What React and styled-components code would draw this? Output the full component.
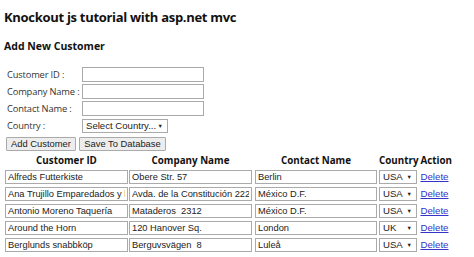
import React from "react";
import styled, { createGlobalStyle } from "styled-components";

const GlobalStyle = createGlobalStyle`
	body {
		margin: 0;
		padding: 0 4px;
		background: #fff;
		color: #111;
		font-family: "Open Sans", "DejaVu Sans", sans-serif;
	}
`;

const Title = styled.h1`
	font-size: 13px;
	font-weight: 700;
	margin: 8px 0 0;
	line-height: 18px;
	letter-spacing: -0.3px;
	white-space: nowrap;
`;

const SubTitle = styled.h2`
	font-size: 10.5px;
	font-weight: 700;
	margin: 13px 0 0;
	line-height: 14px;
`;

const Form = styled.div`
	margin-top: 14px;
	display: grid;
	grid-template-columns: 78px auto;
	grid-auto-rows: 15px;
	row-gap: 2px;
	align-items: center;
	justify-items: start;
`;

const Label = styled.label`
	font-size: 9.3px;
	letter-spacing: -0.15px;
	color: #333;
	line-height: 15px;
	padding-left: 3px;
	white-space: nowrap;
`;

const TextInput = styled.input`
	display: block;
	box-sizing: border-box;
	width: ${ p => p.w || 122 }px;
	height: ${ p => p.h || 15 }px;
	border: 1px solid #aaa;
	padding: 0 2px;
	font-family: "Liberation Sans", Arial, sans-serif;
	font-size: 9.3px;
	color: #222;
	background: #fff;
	margin: 0;
	outline: none;
`;

const Select = styled.div`
	box-sizing: border-box;
	width: ${ p => p.w }px;
	height: 14px;
	border: 1px solid #aaa;
	background: #fff;
	display: flex;
	align-items: center;
	justify-content: space-between;
	padding: 0 4px 0 3px;
	font-family: "Liberation Sans", Arial, sans-serif;
	font-size: 9.6px;
	color: #222;
	white-space: nowrap;
	&::after {
		content: "▼";
		font-size: 5.5px;
	}
`;

const Buttons = styled.div`
	display: flex;
	gap: 3px;
	margin-top: 4px;
	padding-left: 2px;
`;

const Button = styled.button`
	box-sizing: border-box;
	width: ${ p => p.w }px;
	height: 14px;
	padding: 0;
	text-align: center;
	border: 1px solid #aaa;
	background: #ededed;
	font-family: "Liberation Sans", Arial, sans-serif;
	font-size: 9.4px;
	color: #222;
	line-height: 12px;
	border-radius: 1px;
`;

const Table = styled.table`
	margin-top: 1px;
	margin-left: 1px;
	border-collapse: separate;
	border-spacing: 0 3.5px;
`;

const Th = styled.th`
	font-size: 9.8px;
	font-weight: 700;
	padding: 0 ${ p => p.pr || 0 }px 0 0;
	line-height: 12px;
	text-align: center;
	white-space: nowrap;
`;

const Td = styled.td`
	padding: 0 ${ p => p.pr || 0 }px 0 0;
	height: 14px;
	font-family: "Liberation Sans", Arial, sans-serif;
	font-size: 9.7px;
	line-height: 14px;
	vertical-align: middle;
`;

const DeleteLink = styled.a`
	color: #3434c8;
	text-decoration: underline;
`;

const customers = [
	["Alfreds Futterkiste", "Obere Str. 57", "Berlin", "USA"],
	["Ana Trujillo Emparedados y helados", "Avda. de la Constitución 2222", "México D.F.", "USA"],
	["Antonio Moreno Taquería", "Mataderos  2312", "México D.F.", "USA"],
	["Around the Horn", "120 Hanover Sq.", "London", "UK"],
	["Berglunds snabbköp", "Berguvsvägen  8", "Luleå", "USA"],
];

export default function App() {
	return (
		<>
			<GlobalStyle />
			<Title>Knockout js tutorial with asp.net mvc</Title>
			<SubTitle>Add New Customer</SubTitle>
			<Form>
				<Label>Customer ID :</Label>
				<TextInput />
				<Label>Company Name :</Label>
				<TextInput />
				<Label>Contact Name :</Label>
				<TextInput />
				<Label>Country :</Label>
				<Select w={86}>Select Country...</Select>
			</Form>
			<Buttons>
				<Button w={70}>Add Customer</Button>
				<Button w={87}>Save To Database</Button>
			</Buttons>
			<Table>
				<thead>
					<tr>
						<Th pr={1}>Customer ID</Th>
						<Th pr={3}>Company Name</Th>
						<Th pr={2}>Contact Name</Th>
						<Th pr={2}>Country</Th>
						<Th>Action</Th>
					</tr>
				</thead>
				<tbody>
					{customers.map(c => (
						<tr key={c[0]}>
							<Td pr={1}><TextInput defaultValue={c[0]} w={123} h={14} /></Td>
							<Td pr={3}><TextInput defaultValue={c[1]} w={123} h={14} /></Td>
							<Td pr={2}><TextInput defaultValue={c[2]} w={122} h={14} /></Td>
							<Td pr={2}><Select w={38}>{c[3]}</Select></Td>
							<Td><DeleteLink href="#">Delete</DeleteLink></Td>
						</tr>
					))}
				</tbody>
			</Table>
		</>
	);
}
